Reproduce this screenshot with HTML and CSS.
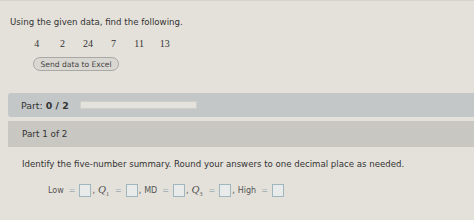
FILE: index.html
```html
<!DOCTYPE html>
<html lang="en">
<head>
    <meta charset="UTF-8">
    <title>Five-number summary</title>
    <link rel="stylesheet" href="styles.css">
</head>
<body>
    <div class="question">
        <p class="intro">Using the given data, find the following.</p>
        <div class="data">
            <span>4</span>
            <span>2</span>
            <span>24</span>
            <span>7</span>
            <span>11</span>
            <span>13</span>
        </div>
        <button class="excel">Send data to Excel</button>
    </div>

    <div class="progress-band">
        <span class="part-label">Part: <b>0 / 2</b></span>
        <div class="progress-track"></div>
    </div>

    <div class="part-head">Part 1 of 2</div>

    <div class="part-body">
        <p class="prompt">Identify the five-number summary. Round your answers to one decimal place as needed.</p>
        <div class="answers">
            <span class="lbl">Low</span><span class="eq">=</span><span class="box"></span><span class="comma">,</span>
            <span class="q">Q<sub>1</sub></span><span class="eq">=</span><span class="box"></span><span class="comma">,</span>
            <span class="lbl">MD</span><span class="eq">=</span><span class="box"></span><span class="comma">,</span>
            <span class="q">Q<sub>3</sub></span><span class="eq">=</span><span class="box"></span><span class="comma">,</span>
            <span class="lbl">High</span><span class="eq">=</span><span class="box"></span>
        </div>
    </div>
</body>
</html>
```

FILE: styles.css
```css
body, html {
    margin: 0;
    padding: 0;
    font-family: "DejaVu Sans", Verdana, sans-serif;
    color: #333;
    background: #e4e1da;
}

body {
    height: 220px;
    overflow: hidden;
    border-top: 1px solid #d6d3cc;
}

.question {
    padding: 15px 0 0 10px;
    height: 76px;
    box-sizing: border-box;
}

.intro {
    margin: 0;
    font-size: 8.65px;
    line-height: 12px;
}

.data {
    display: flex;
    margin: 10px 0 0 14px;
    font-family: "Liberation Serif", "Times New Roman", serif;
    font-size: 10px;
    line-height: 12px;
}

.data span {
    width: 25.6px;
    text-align: center;
}

.excel {
    display: block;
    margin: 7px 0 0 23px;
    width: 86px;
    height: 14px;
    padding: 0;
    border: 1px solid #a9a8a4;
    border-radius: 7px;
    background: #d9d7d1;
    color: #444;
    font-family: "DejaVu Sans", Verdana, sans-serif;
    font-size: 7.6px;
}

.progress-band {
    margin: 16px 0 0 8px;
    height: 24px;
    background: #c3c7c8;
    border-radius: 3px 0 0 3px;
    display: flex;
    align-items: center;
    padding-left: 13px;
    font-size: 9.4px;
}

.part-label b {
    font-weight: bold;
}

.progress-track {
    margin-left: 11px;
    width: 115px;
    height: 6px;
    background: #e3e2dc;
    border: 1px solid #d0d0cb;
    border-radius: 1px;
}

.part-head {
    margin: 4px 0 0 8px;
    height: 26px;
    background: #c8c7c2;
    display: flex;
    align-items: center;
    padding-left: 14px;
    font-size: 8.8px;
}

.part-body {
    padding: 11px 0 0 22px;
}

.prompt {
    margin: 0;
    font-size: 8.6px;
    line-height: 12px;
}

.answers {
    display: flex;
    align-items: center;
    margin: 13px 0 0 26px;
    font-size: 8px;
    color: #555;
}

.lbl {
    margin-right: 5px;
}

.eq {
    color: #9aacb2;
    margin-right: 4px;
}

.box {
    display: inline-block;
    width: 10px;
    height: 11px;
    border: 1px solid #9fb6bf;
    background: #e8ebea;
}

.comma {
    margin: 0 3px 0 1px;
}

.q {
    font-family: "Liberation Serif", serif;
    font-style: italic;
    font-size: 11px;
    margin-right: 6px;
}

.q sub {
    font-size: 6px;
    font-style: normal;
}
```
